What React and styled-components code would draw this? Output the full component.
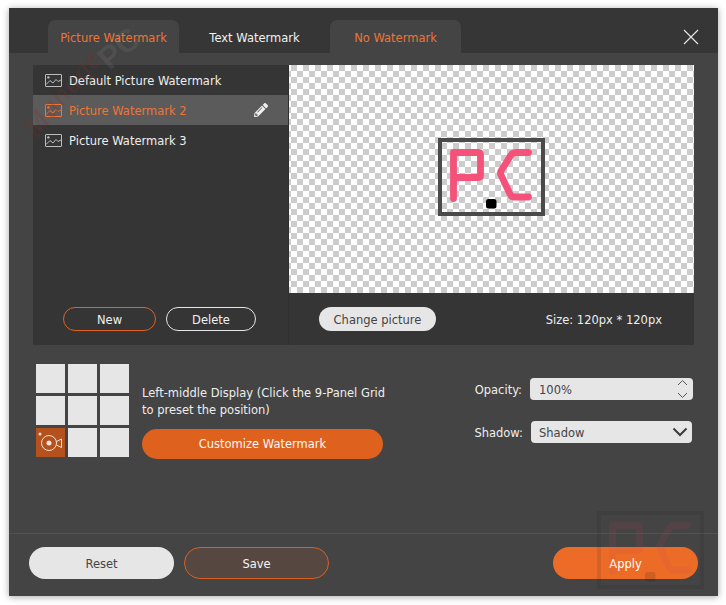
import React from 'react';
import styled, { createGlobalStyle } from 'styled-components';
import { FaPencilAlt } from 'react-icons/fa';

const Global = createGlobalStyle`
  html, body { margin: 0; padding: 0; background: #fff; }
  body { width: 726px; height: 605px; overflow: hidden; font-family: "DejaVu Sans", "Liberation Sans", sans-serif; font-size: 11.5px; }
  * { box-sizing: border-box; }
`;

const Page = styled.div`
  width: 726px; height: 605px; padding: 8px 8px 9px 9px;
`;
const Window = styled.div`
  position: relative; width: 709px; height: 588px; background: #444;
  display: flex; flex-direction: column; overflow: hidden;
  box-shadow: 0 1px 7px rgba(0,0,0,.35);
`;
const TabBar = styled.div`
  height: 45px; background: #363636; display: flex; align-items: flex-end;
  padding-left: 39px; flex: none; position: relative;
`;
const Tab = styled.div`
  height: 33px; width: ${p => p.$w}px; border-radius: 7px 7px 0 0;
  background: ${p => p.$plain ? 'transparent' : '#444'};
  color: ${p => p.$plain ? '#f1f1f1' : '#ec7538'};
  display: flex; align-items: center; justify-content: center; padding-top: 2px;
`;
const Close = styled.svg`
  position: absolute; right: 19px; top: 21px; width: 16px; height: 16px;
`;
const Panel = styled.div`
  margin: 12px 24px 0 24px; height: 280px; background: #353535;
  display: grid; grid-template-columns: 255px 1fr; column-gap: 1px; flex: none;
`;
const Left = styled.div`
  display: flex; flex-direction: column; justify-content: space-between;
`;
const List = styled.div`display: flex; flex-direction: column;`;
const Row = styled.div`
  height: 30px; display: flex; align-items: center; gap: 7px; padding: 0 20px 0 12px;
  background: ${p => p.$active ? '#5b5b5b' : 'transparent'};
  color: ${p => p.$active ? '#ec7538' : '#eee'};
`;
const RowLabel = styled.span`flex: 1; white-space: nowrap; padding-top: 1px;`;
const LeftFoot = styled.div`
  height: 52px; display: flex; align-items: center; justify-content: center; gap: 10px; padding-right: 2px;
`;
const OutlineBtn = styled.div`
  width: ${p => p.$w}px; height: 24px; border-radius: 12px; color: #f1f1f1;
  border: 1px solid ${p => p.$accent ? '#df631e' : '#e6e6e6'};
  display: flex; align-items: center; justify-content: center; padding-top: 1px;
`;
const Right = styled.div`display: flex; flex-direction: column; border-left: 1px solid #2f2f2f; margin-left: -1px;`;
const Preview = styled.div`
  height: 228px; display: flex; align-items: center; justify-content: center; padding-bottom: 4px;
  background-color: #fff;
  background-image: conic-gradient(#ccc 25%, #fff 0 50%, #ccc 0 75%, #fff 0);
  background-size: 12px 12px;
  background-position: -4px 0;
`;
const RightFoot = styled.div`
  height: 52px; display: flex; align-items: center; justify-content: space-between; padding: 0 32px 0 30px;
  color: #eee;
`;
const SizeText = styled.span`padding-top: 1px;`;
const LightSmall = styled.div`
  width: 117px; height: 24px; border-radius: 12px; background: #e6e6e6; color: #444;
  display: flex; align-items: center; justify-content: center; padding-top: 1px;
`;
const Settings = styled.div`
  display: flex; padding: 19px 24px 0 27px; height: 188px; flex: none;
`;
const Grid9 = styled.div`
  display: grid; grid-template-columns: repeat(3, 29px); grid-auto-rows: 29px; gap: 3px; align-self: flex-start;
`;
const Cell = styled.div`
  background: ${p => p.$on ? '#b4511d' : '#e6e6e6'};
  display: flex; align-items: center; justify-content: center;
`;
const Mid = styled.div`
  margin-left: 13px; width: 241px; padding-top: 21px; display: flex; flex-direction: column; color: #eee; line-height: 17px; white-space: nowrap;
`;
const Custom = styled.div`
  margin-top: 10px; height: 30px; border-radius: 15px; background: #de611e; color: #f6f6f6; padding-top: 1px;
  display: flex; align-items: center; justify-content: center;
`;
const Fields = styled.div`
  margin-left: auto; width: 225px; padding-top: 14px; display: flex; flex-direction: column; gap: 21px; color: #eee;
`;
const FieldRow = styled.div`display: flex; align-items: center; justify-content: flex-end; gap: ${p => p.$gap}px; padding-right: ${p => p.$pr}px;`;
const FieldLabel = styled.span`padding-top: 2px;`;
const FieldValue = styled.span`padding-top: 1px;`;
const Input = styled.div`
  width: ${p => p.$w}px; height: 22px; border-radius: 4px; background: #e6e6e6; color: #444;
  display: flex; align-items: center; justify-content: space-between; padding: 0 4px 0 ${p => p.$pl}px;
`;
const Steppers = styled.svg`width: 13px; height: 22px; flex: none;`;
const Divider = styled.div`height: 1px; background: #525252; flex: none;`;
const Footer = styled.div`
  display: flex; align-items: flex-start; padding: 13px 20px 0 20px; gap: 10px;
`;
const Big = styled.div`
  width: 145px; height: 32px; border-radius: 16px; padding-top: 1px;
  display: flex; align-items: center; justify-content: center;
  ${p => p.$kind === 'light' && 'background:#e6e6e6;color:#444;'}
  ${p => p.$kind === 'save' && 'background:#564840;color:#f5f5f5;border:1px solid #d9601f;'}
  ${p => p.$kind === 'apply' && 'background:#ec6c27;color:#fff;margin-left:auto;'}
`;
const Mark = styled.div`
  position: absolute; left: 588px; top: 503px; opacity: .12; pointer-events: none;
`;
const Scrawl = styled.div`
  position: absolute; top: 102px; left: 32px; transform: rotate(-50deg); transform-origin: left bottom;
  font-family: "Liberation Serif", serif; font-style: italic; font-size: 30px;
  color: rgba(150, 40, 40, .24); white-space: nowrap; pointer-events: none; letter-spacing: 1px;
`;
const ScrawlPC = styled.div`
  position: absolute; left: 88px; top: 22px; transform: rotate(-42deg);
  font-family: "Liberation Sans", sans-serif; font-weight: bold; font-size: 32px;
  color: rgba(255,255,255,.07); pointer-events: none;
`;

const PicIcon = ({ c }) => (
  <svg width="17" height="13" viewBox="0 0 17 13" fill="none" stroke={c} strokeWidth="1">
    <rect x=".5" y=".5" width="16" height="12" rx=".5" />
    <circle cx="3.4" cy="3.4" r="1.2" fill={c} stroke="none" />
    <path d="M1 10.5 L5 6.5 L8 9 L11 5.5 L13 7.5 L16 6" />
  </svg>
);

const Logo = ({ box = '#4a4a4a', pink = '#f4527a' }) => (
  <svg width="107" height="78" viewBox="0 0 107 78" fill="none">
    <rect x="2" y="2" width="103" height="74" stroke={box} strokeWidth="4" />
    <path d="M15.5 60.5 V14.5 H40 Q42.500 14.500 42.500 17 V37 Q42.500 39.500 40 39.500 H16" stroke={pink} strokeWidth="6.800" strokeLinecap="round" strokeLinejoin="round" />
    <path d="M90.500 14.500 H78 Q75 14.500 73 17 L63 33 Q62 35 63 37 L72 56 Q73.500 59 76 59 H90.500" stroke={pink} strokeWidth="6.800" strokeLinecap="round" strokeLinejoin="round" />
    <rect x="48" y="61" width="10.500" height="9.500" rx="2.500" fill="#000" />
  </svg>
);

export default function App() {
  return (
    <Page>
      <Global />
      <Window>
        <TabBar>
          <Tab $w={131}>Picture Watermark</Tab>
          <Tab $w={151} $plain>Text Watermark</Tab>
          <Tab $w={131}>No Watermark</Tab>
          <Close viewBox="0 0 16 16" fill="none" stroke="#e8e8e8" strokeWidth="1.100">
            <path d="M1 1 L15 15 M15 1 L1 15" />
          </Close>
        </TabBar>
        <Panel>
          <Left>
            <List>
              <Row><PicIcon c="#bdbdbd" /><RowLabel>Default Picture Watermark</RowLabel></Row>
              <Row $active><PicIcon c="#ec7538" /><RowLabel>Picture Watermark 2</RowLabel><FaPencilAlt size={14} color="#eee" /></Row>
              <Row><PicIcon c="#bdbdbd" /><RowLabel>Picture Watermark 3</RowLabel></Row>
            </List>
            <LeftFoot>
              <OutlineBtn $w={93} $accent>New</OutlineBtn>
              <OutlineBtn $w={90}>Delete</OutlineBtn>
            </LeftFoot>
          </Left>
          <Right>
            <Preview><Logo /></Preview>
            <RightFoot>
              <LightSmall>Change picture</LightSmall>
              <SizeText>Size: 120px * 120px</SizeText>
            </RightFoot>
          </Right>
        </Panel>
        <Settings>
          <Grid9>
            <Cell /><Cell /><Cell /><Cell /><Cell /><Cell />
            <Cell $on>
              <svg width="27" height="23" viewBox="0 0 27 23" fill="none" stroke="#f3e3d8" strokeWidth="1">
                <circle cx="3" cy="3" r="1.500" fill="#f3e3d8" stroke="none" />
                <circle cx="12" cy="12" r="7.500" />
                <circle cx="12" cy="12" r="2.500" fill="#f3e3d8" stroke="none" />
                <path d="M19.500 10.500 L24.500 8 V16.500 L19.500 14" />
              </svg>
            </Cell>
            <Cell /><Cell />
          </Grid9>
          <Mid>
            <span>Left-middle Display (Click the 9-Panel Grid<br />to preset the position)</span>
            <Custom>Customize Watermark</Custom>
          </Mid>
          <Fields>
            <FieldRow $gap={8} $pr={1}>
              <FieldLabel>Opacity:</FieldLabel>
              <Input $w={163} $pl={9}>
                <FieldValue>100%</FieldValue>
                <Steppers viewBox="0 0 13 22" fill="none" stroke="#555" strokeWidth="1">
                  <path d="M2 7 L6.500 2.500 L11 7 M2 15 L6.500 19.500 L11 15" />
                </Steppers>
              </Input>
            </FieldRow>
            <FieldRow $gap={8} $pr={2}>
              <FieldLabel>Shadow:</FieldLabel>
              <Input $w={161} $pl={8}>
                <FieldValue>Shadow</FieldValue>
                <svg width="16" height="10" viewBox="0 0 16 10" fill="none" stroke="#3c3c3c" strokeWidth="2"><path d="M1.500 1.500 L8 8 L14.500 1.500" /></svg>
              </Input>
            </FieldRow>
          </Fields>
        </Settings>
        <Divider />
        <Footer>
          <Big $kind="light">Reset</Big>
          <Big $kind="save">Save</Big>
          <Big $kind="apply">Apply</Big>
        </Footer>
        <Scrawl>Manage</Scrawl>
        <ScrawlPC>PC</ScrawlPC>
        <Mark><Logo box="#222" pink="#c23c5c" /></Mark>
      </Window>
    </Page>
  );
}
